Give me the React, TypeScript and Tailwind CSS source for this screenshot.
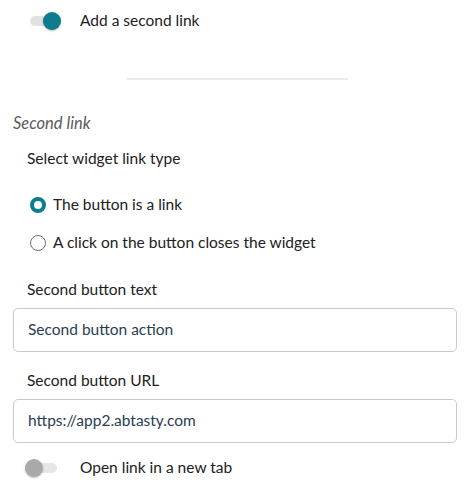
import React from "react";

function Toggle({ on }: { on: boolean }) {
  return (
    <div className="relative w-[28px] h-[18px] flex items-center">
      <div className={`w-[28px] h-[10px] rounded-full ${on ? "bg-[#e2e2e2]" : "bg-[#e6e6e6]"}`} />
      {on ? (
        <div className="absolute right-[-3px] top-0 w-[18px] h-[18px] rounded-full bg-[#0b7d8e] shadow-[0_1px_2px_rgba(0,0,0,0.3)]" />
      ) : (
        <div className="absolute left-[-4px] top-0 w-[18px] h-[18px] rounded-full bg-[#a9a9a9] shadow-[0_1px_2px_rgba(0,0,0,0.25)]" />
      )}
    </div>
  );
}

export default function App() {
  return (
    <div className="w-[474px] h-[490px] bg-white text-[#212121] font-['Lato','Noto_Sans',sans-serif] text-[15.5px] px-[13px] overflow-hidden">
      <div className="flex items-center h-[42px] pl-[17px]">
        <Toggle on={true} />
        <span className="ml-[22px] text-[15.5px]">Add a second link</span>
      </div>
      <div className="flex justify-center pt-[36px]">
        <div className="w-[222px] h-[2px] bg-[#ececec]" />
      </div>
      <div className="mt-[32px] text-[16.5px] italic text-[#5a5a5a] leading-[22px]">Second link</div>
      <div className="mt-[13px] pl-[14px] leading-[22px]">Select widget link type</div>
      <div className="mt-[27px] pl-[17px] flex flex-col gap-[20px]">
        <label className="flex items-center h-[18px]">
          <span className="w-[16px] h-[16px] rounded-full border-[4px] border-[#0b7d8e] bg-white" />
          <span className="ml-[7px]">The button is a link</span>
        </label>
        <label className="flex items-center h-[18px]">
          <span className="w-[16px] h-[16px] rounded-full border border-[#6f6f6f] bg-white" />
          <span className="ml-[7px]">A click on the button closes the widget</span>
        </label>
      </div>
      <div className="mt-[26px] pl-[14px] leading-[22px]">Second button text</div>
      <div className="mt-[8px] h-[44px] w-[444px] rounded-[5px] border border-[#c9c9c9] flex items-center px-[14px] text-[#2b3d52]">
        Second button action
      </div>
      <div className="mt-[17px] pl-[14px] leading-[22px]">Second button URL</div>
      <div className="mt-[8px] h-[44px] w-[444px] rounded-[5px] border border-[#c9c9c9] flex items-center px-[14px] text-[#2b3d52]">
        https://app2.abtasty.com
      </div>
      <div className="flex items-center h-[18px] mt-[16px] pl-[16px]">
        <Toggle on={false} />
        <span className="ml-[23px]">Open link in a new tab</span>
      </div>
    </div>
  );
}
